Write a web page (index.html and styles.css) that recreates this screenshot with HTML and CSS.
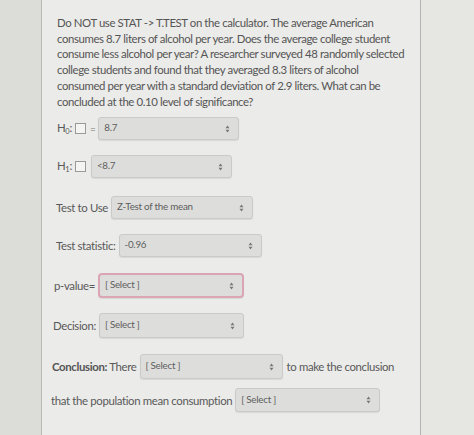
FILE: index.html
```html
<!DOCTYPE html>
<html>
<head>
<meta charset="utf-8">
<link rel="stylesheet" href="styles.css">
</head>
<body>
<div class="page">
  <div class="side-left"></div>
  <div class="main">
    <p class="question">Do NOT use STAT -&gt; T.TEST on the calculator. The average American<br>consumes 8.7 liters of alcohol per year. Does the average college student<br>consume less alcohol per year? A researcher surveyed 48 randomly selected<br>college students and found that they averaged 8.3 liters of alcohol<br>consumed per year with a standard deviation of 2.9 liters. What can be<br>concluded at the 0.10 level of significance?</p>

    <div class="row row-h0">
      <span class="label">H<sub>0</sub>:</span>
      <span class="check"></span>
      <span class="eq">=</span>
      <div class="select w141"><span>8.7</span><svg class="arr" viewBox="0 0 6 10"><path d="M3 0.5 L5.5 4 L0.5 4 Z M3 9.5 L5.5 6 L0.5 6 Z" fill="#777"/></svg></div>
    </div>

    <div class="row row-h1">
      <span class="label">H<sub>1</sub>:</span>
      <span class="check"></span>
      <div class="select w141 ml4"><span>&lt;8.7</span><svg class="arr" viewBox="0 0 6 10"><path d="M3 0.5 L5.5 4 L0.5 4 Z M3 9.5 L5.5 6 L0.5 6 Z" fill="#777"/></svg></div>
    </div>

    <div class="row row-ttu">
      <span class="label">Test to Use</span>
      <div class="select w142"><span>Z-Test of the mean</span><svg class="arr" viewBox="0 0 6 10"><path d="M3 0.5 L5.5 4 L0.5 4 Z M3 9.5 L5.5 6 L0.5 6 Z" fill="#777"/></svg></div>
    </div>

    <div class="row row-ts">
      <span class="label">Test statistic:</span>
      <div class="select w143"><span>-0.96</span><svg class="arr" viewBox="0 0 6 10"><path d="M3 0.5 L5.5 4 L0.5 4 Z M3 9.5 L5.5 6 L0.5 6 Z" fill="#777"/></svg></div>
    </div>

    <div class="row row-pv">
      <span class="label">p-value=</span>
      <div class="select w146 tall invalid"><span>[ Select ]</span><svg class="arr" viewBox="0 0 6 10"><path d="M3 0.5 L5.5 4 L0.5 4 Z M3 9.5 L5.5 6 L0.5 6 Z" fill="#777"/></svg></div>
    </div>

    <div class="row row-dec">
      <span class="label">Decision:</span>
      <div class="select w145 tall"><span>[ Select ]</span><svg class="arr" viewBox="0 0 6 10"><path d="M3 0.5 L5.5 4 L0.5 4 Z M3 9.5 L5.5 6 L0.5 6 Z" fill="#777"/></svg></div>
    </div>

    <div class="row row-con">
      <span class="label"><b>Conclusion:</b> There</span>
      <div class="select w143 tall"><span>[ Select ]</span><svg class="arr" viewBox="0 0 6 10"><path d="M3 0.5 L5.5 4 L0.5 4 Z M3 9.5 L5.5 6 L0.5 6 Z" fill="#777"/></svg></div>
      <span class="label after">to make the conclusion</span>
    </div>

    <div class="row row-last">
      <span class="label">that the population mean consumption</span>
      <div class="select w145 mid"><span>[ Select ]</span><svg class="arr" viewBox="0 0 6 10"><path d="M3 0.5 L5.5 4 L0.5 4 Z M3 9.5 L5.5 6 L0.5 6 Z" fill="#777"/></svg></div>
    </div>
  </div>
  <div class="side-right"></div>
</div>
</body>
</html>
```

FILE: styles.css
```css
html, body {
  margin: 0;
  padding: 0;
}
body {
  width: 474px;
  height: 435px;
  overflow: hidden;
  background: #e3e3e0;
  font-family: Lato, "Liberation Sans", sans-serif;
  color: #585858;
}
.page {
  display: flex;
  height: 435px;
}
.side-left {
  width: 41px;
  background: #dcdcd9;
  border-right: 1px solid #b8b8b5;
  flex: none;
}
.main {
  width: 378px;
  flex: none;
  background: #ebebe9;
  padding-left: 15px;
  box-sizing: border-box;
}
.side-right {
  flex: 1;
  background: #e6e6e3;
  border-left: 1px solid #b3b3b0;
}
.question {
  margin: 15px 0 0 0;
  font-size: 11.4px;
  letter-spacing: -0.4px;
  line-height: 15.7px;
  color: #555;
  white-space: nowrap;
}
.row {
  display: flex;
  align-items: center;
  font-size: 11.4px;
  letter-spacing: -0.35px;
}
.label {
  white-space: nowrap;
  color: #595959;
}
.label b {
  font-weight: 700;
  color: #555;
}
.label sub {
  font-size: 7.5px;
  vertical-align: -2px;
}
.check {
  width: 9px;
  height: 9px;
  border: 1px solid #9a9a9a;
  background: #f4f4f2;
  margin-left: 3px;
  flex: none;
}
.eq {
  margin-left: 4px;
  font-size: 10px;
  color: #777;
}
.select {
  height: 23px;
  box-sizing: border-box;
  border: 1px solid #cacac8;
  border-radius: 3px;
  background: #dddddb;
  box-shadow: 0 1px 1px rgba(0,0,0,0.08);
  display: flex;
  align-items: center;
  justify-content: space-between;
  padding: 0 8px 0 5px;
  margin-left: 3px;
  font-size: 9.8px;
  letter-spacing: -0.25px;
  color: #5e5e5e;
  flex: none;
}
.select span {
  margin-top: -3px;
}
.select.tall { height: 25px; }
.select.mid { height: 24px; }
.arr {
  width: 5px;
  height: 8px;
}
.select.invalid {
  border: 2px solid #dba5b3;
  border-radius: 4px;
}
.ml4 { margin-left: 5px; }
.w141 { width: 141px; }
.w142 { width: 142px; }
.w143 { width: 143px; }
.w145 { width: 145px; }
.w146 { width: 146px; }
.after { margin-left: 4px; }

.row-h0 { margin-top: 8px; }
.row-h1 { margin-top: 15px; }
.row-ttu { margin-top: 18px; margin-left: -1px; }
.row-ts { margin-top: 15px; margin-left: -1px; }
.row-pv { margin-top: 16px; margin-left: -3px; }
.row-dec { margin-top: 15px; margin-left: -4px; }
.row-con { margin-top: 16px; margin-left: -5px; }
.row-last { margin-top: 9px; margin-left: -6px; }
```
